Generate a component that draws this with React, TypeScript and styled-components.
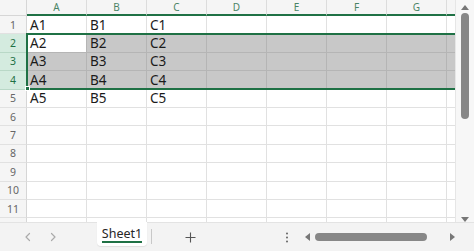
import React from 'react';
import styled, { createGlobalStyle } from 'styled-components';

const GlobalStyle = createGlobalStyle`
  html, body {
    margin: 0;
    padding: 0;
    background: #ffffff;
    overflow: hidden;
  }
  * {
    box-sizing: border-box;
  }
`;

const GREEN = '#1f7145';
const ROW_H = 18.4;
const COL_W = 60;
const HEAD_W = 27;
const HEAD_H = 16;

const Workbook = styled.div`
  width: 474px;
  height: 251px;
  display: flex;
  flex-direction: column;
  font-family: 'Segoe UI', 'Noto Sans', 'Open Sans', sans-serif;
  background: #fff;
  overflow: hidden;
`;

const Main = styled.div`
  height: 223px;
  display: flex;
  border-bottom: 1px solid #e3e3e3;
`;

const Sheet = styled.div`
  position: relative;
  flex: 1;
  overflow: hidden;
`;

const Row = styled.div`
  display: flex;
  height: ${ROW_H}px;
`;

const HeaderRow = styled.div`
  display: flex;
  height: ${HEAD_H}px;
  background: #f5f5f5;
`;

const Corner = styled.div`
  width: ${HEAD_W}px;
  flex: none;
  border-right: 1px solid #d6d6d6;
  border-bottom: 1px solid #d6d6d6;
`;

const ColHead = styled.div<{ $w?: number }>`
  width: ${(p) => p.$w ?? COL_W}px;
  flex: none;
  display: flex;
  align-items: center;
  justify-content: center;
  font-size: 10px;
  color: #4a8466;
  border-right: 1px solid #dcdcdc;
  border-bottom: 2px solid ${GREEN};
`;

const RowHead = styled.div<{ $sel?: boolean }>`
  width: ${HEAD_W}px;
  flex: none;
  display: flex;
  align-items: center;
  justify-content: center;
  font-size: 10.5px;
  color: ${(p) => (p.$sel ? GREEN : '#666')};
  background: ${(p) => (p.$sel ? '#d4ebdf' : '#f5f5f5')};
  border-right: 1px solid ${(p) => (p.$sel ? GREEN : '#d6d6d6')};
  border-bottom: 1px solid ${(p) => (p.$sel ? '#b9d8c7' : '#e1e1e1')};
`;

const Cell = styled.div<{ $sel?: boolean; $active?: boolean; $w?: number }>`
  width: ${(p) => p.$w ?? COL_W}px;
  flex: none;
  display: flex;
  align-items: center;
  padding-left: 3px;
  font-size: 13.5px;
  color: #1b1b1b;
  background: ${(p) => (p.$active ? '#fff' : p.$sel ? '#c8c8c8' : '#fff')};
  border-right: 1px solid ${(p) => (p.$sel ? '#b5b5b5' : '#e1e1e1')};
  border-bottom: 1px solid ${(p) => (p.$sel ? '#b5b5b5' : '#e1e1e1')};
`;

const SelectionBox = styled.div`
  position: absolute;
  left: ${HEAD_W - 1}px;
  top: ${HEAD_H + ROW_H - 1}px;
  right: 0;
  height: ${ROW_H * 3 + 1}px;
  border: 2px solid ${GREEN};
  border-right: none;
  pointer-events: none;
`;

const Handle = styled.div`
  position: absolute;
  left: -3px;
  bottom: -3px;
  width: 5px;
  height: 5px;
  background: ${GREEN};
  border: 1px solid #fff;
`;

const VScroll = styled.div`
  width: 19px;
  flex: none;
  background: #f7f7f7;
  border-left: 1px solid #e6e6e6;
  display: flex;
  flex-direction: column;
  align-items: center;
  padding: 5px 0 0;
`;

const VThumb = styled.div`
  width: 8px;
  height: 106px;
  margin-top: 3px;
  border-radius: 4px;
  background: #878787;
`;

const Spacer = styled.div`
  flex: 1;
`;

const Arrow = styled.div<{ $dir: 'up' | 'down' | 'left' | 'right' }>`
  width: 0;
  height: 0;
  flex: none;
  ${(p) =>
    p.$dir === 'up'
      ? 'border-left: 4px solid transparent; border-right: 4px solid transparent; border-bottom: 5px solid #777;'
      : p.$dir === 'down'
      ? 'border-left: 4px solid transparent; border-right: 4px solid transparent; border-top: 5px solid #777;'
      : p.$dir === 'left'
      ? 'border-top: 4px solid transparent; border-bottom: 4px solid transparent; border-right: 5px solid #777;'
      : 'border-top: 4px solid transparent; border-bottom: 4px solid transparent; border-left: 5px solid #777;'}
`;

const BottomBar = styled.div`
  flex: 1;
  display: flex;
  align-items: stretch;
  background: #f3f3f3;
`;

const NavButton = styled.div`
  width: 25px;
  display: flex;
  align-items: center;
  justify-content: center;
  color: #aaa;
`;

const NavGroup = styled.div`
  display: flex;
  padding-left: 15px;
  width: 97px;
`;

const Tab = styled.div`
  width: 50px;
  height: 24px;
  margin-top: -1px;
  background: #fff;
  border-radius: 0 0 4px 4px;
  display: flex;
  flex-direction: column;
  align-items: center;
  justify-content: center;
  box-shadow: 0 1px 1px rgba(0, 0, 0, 0.08);
`;

const TabLabel = styled.span`
  font-size: 12.5px;
  color: #262626;
  line-height: 15px;
  border-bottom: 2px solid ${GREEN};
`;

const TabDivider = styled.div`
  width: 1px;
  height: 15px;
  margin: 6px 0 0 4px;
  background: #c8c8c8;
`;

const AddButton = styled.div`
  width: 76px;
  display: flex;
  align-items: center;
  justify-content: center;
  color: #555;
`;

const MoreDots = styled.div`
  width: 64px;
  display: flex;
  align-items: center;
  justify-content: flex-end;
  padding-right: 3px;
  color: #666;
`;

const HScroll = styled.div`
  flex: 1;
  display: flex;
  align-items: center;
  padding: 0 19px 0 13px;
`;

const HThumb = styled.div`
  width: 112px;
  height: 8px;
  margin-left: 5px;
  border-radius: 4px;
  background: #878787;
`;

const columns = ['A', 'B', 'C', 'D', 'E', 'F', 'G'];
const rowCount = 12;

const cellText = (col: string, row: number) => (row <= 5 && col <= 'C' ? `${col}${row}` : '');

const Chevron: React.FC<{ dir: 'left' | 'right' }> = ({ dir }) => (
  <svg width="8" height="10" viewBox="0 0 8 10" fill="none">
    <path
      d={dir === 'left' ? 'M5.5 1.5 L2 5 L5.5 8.5' : 'M2.5 1.5 L6 5 L2.5 8.5'}
      stroke="currentColor"
      strokeWidth="1.2"
      strokeLinecap="round"
      strokeLinejoin="round"
    />
  </svg>
);

const App: React.FC = () => {
  return (
    <Workbook>
      <GlobalStyle />
      <Main>
        <Sheet>
          <HeaderRow>
            <Corner />
            {columns.map((c) => (
              <ColHead key={c}>{c}</ColHead>
            ))}
            <ColHead $w={20} />
          </HeaderRow>
          {Array.from({ length: rowCount }, (_, i) => i + 1).map((r) => {
            const sel = r >= 2 && r <= 4;
            return (
              <Row key={r}>
                <RowHead $sel={sel}>{r < rowCount ? r : ''}</RowHead>
                {columns.map((c) => (
                  <Cell key={c} $sel={sel} $active={r === 2 && c === 'A'}>
                    {cellText(c, r)}
                  </Cell>
                ))}
                <Cell $sel={sel} $w={20} />
              </Row>
            );
          })}
          <SelectionBox>
            <Handle />
          </SelectionBox>
        </Sheet>
        <VScroll>
          <Arrow $dir="up" />
          <VThumb />
          <Spacer />
          <Arrow $dir="down" />
        </VScroll>
      </Main>
      <BottomBar>
        <NavGroup>
          <NavButton>
            <Chevron dir="left" />
          </NavButton>
          <NavButton>
            <Chevron dir="right" />
          </NavButton>
        </NavGroup>
        <Tab>
          <TabLabel>Sheet1</TabLabel>
        </Tab>
        <TabDivider />
        <AddButton>
          <svg width="11" height="11" viewBox="0 0 11 11">
            <path d="M5.5 0.5 V10.5 M0.5 5.5 H10.5" stroke="#555" strokeWidth="1.1" />
          </svg>
        </AddButton>
        <MoreDots>
          <svg width="4" height="11" viewBox="0 0 4 11">
            <circle cx="2" cy="1.5" r="1" fill="#666" />
            <circle cx="2" cy="5.5" r="1" fill="#666" />
            <circle cx="2" cy="9.5" r="1" fill="#666" />
          </svg>
        </MoreDots>
        <HScroll>
          <Arrow $dir="left" />
          <HThumb />
          <Spacer />
          <Arrow $dir="right" />
        </HScroll>
      </BottomBar>
    </Workbook>
  );
};

export default App;
